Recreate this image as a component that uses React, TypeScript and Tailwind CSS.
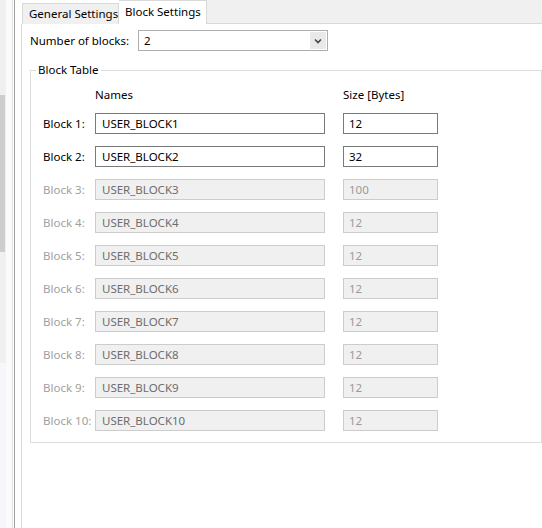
import React from "react";

const rows = [
  { n: 1, name: "USER_BLOCK1", size: "12", on: true },
  { n: 2, name: "USER_BLOCK2", size: "32", on: true },
  { n: 3, name: "USER_BLOCK3", size: "100", on: false },
  { n: 4, name: "USER_BLOCK4", size: "12", on: false },
  { n: 5, name: "USER_BLOCK5", size: "12", on: false },
  { n: 6, name: "USER_BLOCK6", size: "12", on: false },
  { n: 7, name: "USER_BLOCK7", size: "12", on: false },
  { n: 8, name: "USER_BLOCK8", size: "12", on: false },
  { n: 9, name: "USER_BLOCK9", size: "12", on: false },
  { n: 10, name: "USER_BLOCK10", size: "12", on: false },
];

export default function App() {
  return (
    <div
      className="w-[542px] h-[528px] flex bg-white text-[11.5px] leading-[16px] text-black overflow-hidden"
      style={{ fontFamily: '"Noto Sans", "Open Sans", sans-serif' }}
    >
      {/* left strip */}
      <div className="w-[21px] h-full flex shrink-0">
        <div className="w-[6px] h-full bg-[#f0f0f0] flex flex-col">
          <div className="h-[95px]" />
          <div className="w-[5px] h-[157px] bg-[#cdcdcd]" />
          <div className="h-[111px]" />
          <div className="w-[9px] h-[165px] bg-[#f6f6fb]" />
        </div>
        <div className="w-[6px] h-full bg-[#fbfbfb]" />
        <div className="w-[1px] h-full bg-[#e3e3e3]" />
        <div className="w-[1px] h-full bg-white" />
        <div className="w-[1px] h-full bg-[#a0a0a0]" />
        <div className="w-[6px] h-full bg-white" />
      </div>

      <div className="flex-1 flex flex-col min-w-0">
        {/* tab bar */}
        <div className="h-[24px] flex items-end shrink-0">
          <div className="w-[1px] h-full bg-white" />
          <div className="h-[21px] w-[97px] bg-[#f0f0f0] border border-b-0 border-[#d9d9d9] flex items-center pl-[6px] whitespace-nowrap">
            General Settings
          </div>
          <div className="h-[24px] w-[88px] bg-white border border-b-0 border-l-0 border-[#d9d9d9] flex items-center pl-[6px] pb-[2px] whitespace-nowrap">
            Block Settings
          </div>
          <div className="flex-1 h-full bg-[#f0f0f0] border-b border-[#d9d9d9]" />
        </div>

        {/* content */}
        <div className="flex-1 border-l border-[#d9d9d9] pl-[8px] pt-[6px] flex flex-col">
          <div className="flex items-center h-[21px]">
            <span className="w-[108px] whitespace-nowrap">Number of blocks:</span>
            <div className="w-[190px] h-[21px] border border-[#adadad] bg-white flex items-center pl-[5px] pr-[1px]">
              <span className="flex-1">2</span>
              <div className="w-[16px] h-[17px] bg-[#e9e9e9] flex items-center justify-center">
                <svg width="8" height="6" viewBox="0 0 8 6">
                  <path d="M1 1.5 L4 4.5 L7 1.5" fill="none" stroke="#444" strokeWidth="1.6" />
                </svg>
              </div>
            </div>
          </div>

          <fieldset className="mt-[11px] mr-0 border border-[#dcdcdc] pl-[12px] pt-[9px] pb-[11px] min-w-0">
            <legend className="ml-[-7px] px-[2px] leading-[16px]">Block Table</legend>
            <div className="flex h-[16px] items-center">
              <span className="w-[52px]" />
              <span className="w-[248px]">Names</span>
              <span>Size [Bytes]</span>
            </div>
            <div className="mt-[10px] flex flex-col gap-[12px]">
              {rows.map((r) => (
                <div key={r.n} className="flex items-center h-[21px]">
                  <span className={`w-[52px] whitespace-nowrap ${r.on ? "text-black" : "text-[#a0a0a0]"}`}>
                    Block {r.n}:
                  </span>
                  <div
                    className={`w-[230px] h-[21px] border flex items-center pl-[6px] ${
                      r.on ? "border-[#7a7a7a] bg-white text-black" : "border-[#cccccc] bg-[#f0f0f0] text-[#6d6d6d]"
                    }`}
                  >
                    {r.name}
                  </div>
                  <div className="w-[18px]" />
                  <div
                    className={`w-[95px] h-[21px] border flex items-center pl-[5px] ${
                      r.on ? "border-[#7a7a7a] bg-white text-black" : "border-[#cccccc] bg-[#f0f0f0] text-[#9a9a9a]"
                    }`}
                  >
                    {r.size}
                  </div>
                </div>
              ))}
            </div>
          </fieldset>
        </div>
      </div>
    </div>
  );
}
